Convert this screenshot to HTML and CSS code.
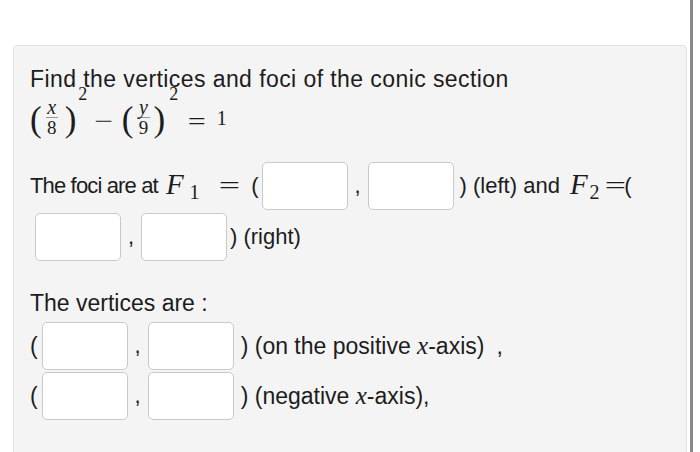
FILE: index.html
```html
<!DOCTYPE html>
<html>
<head>
<meta charset="utf-8">
<link rel="stylesheet" href="styles.css">
</head>
<body>
<div class="page">
  <div class="main">
    <div class="card">
      <div class="title">Find the vertices and foci of the conic section</div>
      <div class="eq">
        <span class="bigp lp1">(</span>
        <span class="frac fr1"><span class="num mi">x</span><span class="bar"></span><span class="den">8</span></span>
        <span class="bigp rp1">)</span>
        <span class="sup s1">2</span>
        <span class="op minus">−</span>
        <span class="bigp lp2">(</span>
        <span class="frac fr2"><span class="num mi">y</span><span class="bar"></span><span class="den">9</span></span>
        <span class="bigp rp2">)</span>
        <span class="sup s2">2</span>
        <span class="op equals">=</span>
        <span class="op one">1</span>
      </div>

      <div class="row foci1">
        <span class="txt cond">The foci are at</span>
        <span class="mvar fv1">F<span class="msub ms1">1</span></span>
        <span class="meq meq1">=</span>
        <span class="txt paren">(</span>
        <span class="box"></span>
        <span class="txt comma">,</span>
        <span class="box"></span>
        <span class="txt after">) (left) and</span>
        <span class="mvar fv2">F<span class="msub ms2">2</span></span>
        <span class="meq meq2">=</span>
        <span class="txt">(</span>
      </div>
      <div class="row foci2">
        <span class="box"></span>
        <span class="txt comma">,</span>
        <span class="box"></span>
        <span class="txt after2">) (right)</span>
      </div>

      <div class="label">The vertices are :</div>
      <div class="row vrow first">
        <span class="txt vparen">(</span>
        <span class="box"></span>
        <span class="txt comma">,</span>
        <span class="box"></span>
        <span class="txt vafter">) (on the positive <span class="mx">x</span>-axis)</span>
        <span class="txt vcomma">,</span>
      </div>
      <div class="row vrow second">
        <span class="txt vparen">(</span>
        <span class="box"></span>
        <span class="txt comma">,</span>
        <span class="box"></span>
        <span class="txt vafter">) (negative <span class="mx">x</span>-axis),</span>
      </div>
    </div>
  </div>
  <div class="edge"></div>
</div>
</body>
</html>
```

FILE: styles.css
```css
html, body {
  margin: 0;
  padding: 0;
  background: #ffffff;
}
body {
  font-family: "Liberation Sans", Arial, sans-serif;
  font-size: 22px;
  color: #1c1c1c;
}
.page {
  display: flex;
  height: 452px;
  overflow: hidden;
}
.main {
  width: 690px;
  padding: 45px 0 0 13px;
  box-sizing: border-box;
}
.card {
  width: 674px;
  height: 440px;
  box-sizing: border-box;
  background: #f4f4f4;
  border: 1px solid #e3e3e3;
  border-radius: 4px 4px 0 0;
  padding: 22px 16px 0 16px;
  display: flex;
  flex-direction: column;
}
.edge {
  width: 3px;
  background: #8a8a8a;
}
.title {
  font-size: 23px;
  letter-spacing: 0.42px;
  line-height: 22px;
  height: 22px;
  white-space: nowrap;
}

/* equation */
.eq {
  display: flex;
  align-items: flex-start;
  height: 44px;
  font-family: "Liberation Serif", "Times New Roman", serif;
}
.bigp {
  font-size: 35px;
  line-height: 35px;
  margin-top: 12px;
}
.lp1 { margin-left: 0; }
.rp1 { margin-left: 6px; }
.lp2 { margin-left: 11px; }
.rp2 { margin-left: 3px; }
.frac {
  display: flex;
  flex-direction: column;
  align-items: center;
  width: 14px;
  margin-top: 9px;
}
.fr1 { margin-left: 3px; }
.fr2 { margin-left: 3px; }
.num {
  font-size: 20px;
  line-height: 16px;
  height: 16px;
}
.mi { font-style: italic; }
.bar {
  width: 12px;
  height: 1px;
  background: rgba(28, 28, 28, 0.45);
  margin: 2px 0;
}
.den {
  font-size: 19px;
  line-height: 16px;
  height: 16px;
}
.sup {
  font-size: 18px;
  line-height: 10px;
  height: 10px;
  margin-top: -1px;
}
.s1 { margin-left: 2px; }
.s2 { margin-left: 4px; }
.op {
  display: inline-block;
}
.minus {
  font-size: 24px;
  line-height: 24px;
  margin-top: 19px;
  margin-left: 10px;
  transform: scaleX(1.4);
}
.equals {
  font-size: 24px;
  line-height: 24px;
  margin-top: 19px;
  margin-left: 12px;
  transform: scaleX(1.33);
}
.one {
  font-size: 20px;
  line-height: 20px;
  margin-top: 18px;
  margin-left: 13px;
}

/* rows with input boxes */
.row {
  display: flex;
  align-items: center;
  height: 49px;
  white-space: nowrap;
}
.foci1 { margin-top: 27px; }
.foci2 { margin-top: 2px; padding-left: 5px; }
.txt {
  line-height: 26px;
}
.cond {
  letter-spacing: -0.85px;
}
.box {
  width: 86px;
  height: 48px;
  box-sizing: border-box;
  background: #ffffff;
  border: 1px solid #c9c9c9;
  border-radius: 5px;
  flex: none;
}
.comma {
  width: 20px;
  text-align: center;
}
.paren { margin-right: 3px; }
.after { margin-left: 6px; }
.after2 { margin-left: 3px; }
.mvar {
  font-family: "Liberation Serif", "Times New Roman", serif;
  font-style: italic;
  font-size: 29px;
  line-height: 26px;
  display: inline-flex;
  align-items: baseline;
}
.fv1 { margin-left: 8px; }
.fv2 { margin-left: 10px; }
.msub {
  font-style: normal;
  font-size: 20px;
  position: relative;
  top: 5px;
}
.ms1 { margin-left: 6px; }
.ms2 { margin-left: 2px; }
.meq {
  font-family: "Liberation Serif", "Times New Roman", serif;
  font-size: 26px;
  line-height: 26px;
  display: inline-block;
  transform: scaleX(1.45);
}
.meq1 { margin: 0 15px 0 22px; }
.meq2 { margin: 0 2px 0 8px; }
.mx {
  font-family: "Liberation Serif", "Times New Roman", serif;
  font-style: italic;
  font-size: 25px;
}
.label {
  font-size: 23px;
  margin-top: 29px;
  line-height: 26px;
  height: 26px;
}
.vrow .txt { font-size: 23px; }
.vrow .comma { font-size: 22px; }
.vparen { margin-right: 4px; }
.vafter { margin-left: 7px; }
.vcomma { margin-left: 12px; }
.vrow.first { margin-top: 5px; }
.vrow.second { margin-top: 1px; }
```
